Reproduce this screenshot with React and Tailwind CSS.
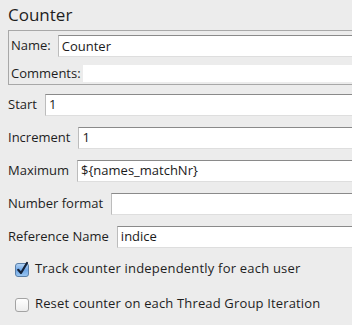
import React from "react";

const fieldCls =
  "h-[22px] flex-1 bg-white border border-t-[#8a8a8a] border-l-[#bcbcbc] border-r-[#bcbcbc] border-b-[#dedede] pl-[3px] flex items-center text-[13px] text-[#1a1a1a] leading-none";

function Row({ label, value, mt }) {
  return (
    <div className={`flex items-center gap-2 pl-2 ${mt}`}>
      <span className="whitespace-nowrap">{label}</span>
      <div className={fieldCls}>{value}</div>
    </div>
  );
}

function CheckedBox() {
  return (
    <svg width="16" height="16" viewBox="0 0 16 16" className="shrink-0">
      <defs>
        <linearGradient id="cbg" x1="0" y1="0" x2="0" y2="1">
          <stop offset="0" stopColor="#b9d7f5" />
          <stop offset="0.5" stopColor="#6fa6e6" />
          <stop offset="1" stopColor="#9cc8f2" />
        </linearGradient>
      </defs>
      <rect x="1.5" y="2.5" width="13" height="13" rx="2.5" fill="url(#cbg)" stroke="#5a7fa8" />
      <path d="M4.2 8.8 L7 12 L13 2" fill="none" stroke="#152238" strokeWidth="2.2" strokeLinecap="round" strokeLinejoin="round" />
    </svg>
  );
}

function EmptyBox() {
  return (
    <svg width="16" height="16" viewBox="0 0 16 16" className="shrink-0">
      <defs>
        <linearGradient id="cbw" x1="0" y1="0" x2="0" y2="1">
          <stop offset="0" stopColor="#ffffff" />
          <stop offset="1" stopColor="#ececec" />
        </linearGradient>
      </defs>
      <rect x="1.5" y="2.5" width="13" height="13" rx="2.5" fill="url(#cbw)" stroke="#a3a3a3" />
    </svg>
  );
}

export default function App() {
  return (
    <div
      className="w-[352px] h-[325px] overflow-hidden bg-[#ececec] text-[13px] text-[#1e1e1e]"
      style={{ fontFamily: '"Open Sans", "DejaVu Sans", sans-serif' }}
    >
      <div className="w-[372px]">
        <div className="pl-2 pt-[3px] text-[17px] leading-[23px]">Counter</div>
        <div className="ml-2 mt-[4px] border border-[#a8a8a8] pt-[4px]">
          <div className="flex items-center gap-[7px] pl-[2px]">
            <span>Name:</span>
            <div className={fieldCls}>Counter</div>
          </div>
          <div className="flex items-center gap-[2px] pl-[2px] mt-[7px]">
            <span>Comments:</span>
            <div className="flex-1 h-[17px] bg-white"></div>
          </div>
        </div>
        <Row label="Start" value="1" mt="mt-[9px]" />
        <Row label="Increment" value="1" mt="mt-[11px]" />
        <Row label="Maximum" value="${names_matchNr}" mt="mt-[11px]" />
        <Row label="Number format" value="" mt="mt-[11px]" />
        <Row label="Reference Name" value="indice" mt="mt-[11px]" />
        <div className="flex items-center gap-[5px] pl-[14px] mt-[11px] h-[20px]">
          <CheckedBox />
          <span className="tracking-[0.2px]">Track counter independently for each user</span>
        </div>
        <div className="flex items-center gap-[5px] pl-[14px] mt-[15px] h-[20px]">
          <EmptyBox />
          <span className="tracking-[0.15px]">Reset counter on each Thread Group Iteration</span>
        </div>
      </div>
    </div>
  );
}
